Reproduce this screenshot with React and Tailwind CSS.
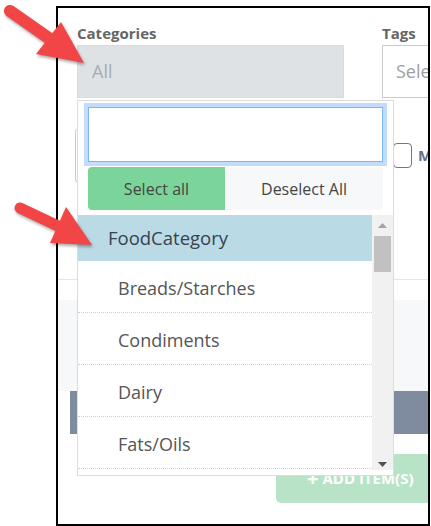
import React from "react";

const items = ["Breads/Starches", "Condiments", "Dairy", "Fats/Oils", "Fruits", "Meats"];

const Arrows = () => (
  <svg
    className="absolute left-0 top-0 z-20 pointer-events-none"
    width="110"
    height="260"
    viewBox="0 0 110 260"
    style={{ filter: "drop-shadow(1px 2px 1.5px rgba(0,0,0,0.35))" }}
  >
    <line x1="10" y1="11" x2="50" y2="39" stroke="#f24646" strokeWidth="12" strokeLinecap="round" />
    <polygon points="61,22 36,54 84,63" fill="#f24646" />
    <line x1="20" y1="208" x2="58" y2="226" stroke="#f24646" strokeWidth="11" strokeLinecap="round" />
    <polygon points="66,207 50,243 92,245" fill="#f24646" />
  </svg>
);

const CategoryDropdown = () => (
  <div className="absolute left-[19px] top-[92px] z-10 w-[317px] h-[376px] bg-white border border-[#dcdcdc] pt-[6px]">
    <div className="px-[10px]">
      <div className="h-[55px] border border-[#7db4f3] shadow-[0_0_0_4px_#c2ddfc] bg-white" />
      <div className="mt-[5px] flex h-[43px] text-[16px] text-[#444]">
        <div className="w-[137px] shrink-0 bg-[#7bd499] rounded-l-[4px] flex items-center justify-center">Select all</div>
        <div className="flex-1 bg-[#f7f8f9] rounded-r-[4px] flex items-center justify-center">Deselect All</div>
      </div>
    </div>
    <div className="mt-[5px] flex h-[255px] overflow-hidden">
      <div className="w-[294px] shrink-0">
        <div className="h-[46px] bg-[#badae6] flex items-center pl-[30px] pb-[1px] text-[18.5px] text-[#36434f]">FoodCategory</div>
        {items.map((item) => (
          <div
            key={item}
            className="h-[52px] border-b border-dotted border-[#d2d2d2] flex items-center pl-[40px] pt-[3px] text-[18px] text-[#555]"
          >
            {item}
          </div>
        ))}
      </div>
      <div className="w-[21px] bg-[#f1f1f1] relative flex flex-col items-center">
        <svg className="mt-[8px]" width="9" height="5" viewBox="0 0 9 5">
          <polygon points="0,5 4.5,0 9,5" fill="#a3a3a3" />
        </svg>
        <div className="mt-[8px] w-[17px] h-[36px] bg-[#c1c1c1]" />
        <div className="flex-1" />
        <svg className="mb-[3px]" width="9" height="5" viewBox="0 0 9 5">
          <polygon points="0,0 9,0 4.5,5" fill="#505050" />
        </svg>
      </div>
    </div>
  </div>
);

export default function App() {
  return (
    <div className="relative w-[431px] h-[526px] bg-white pl-[56px] pt-[6px] overflow-hidden" style={{ fontFamily: '"Open Sans", "Liberation Sans", sans-serif' }}>
      <Arrows />
      <div className="relative w-[374px] h-[520px] border-2 border-black overflow-hidden">
        <div className="flex pt-[15px] pl-[19px]">
          <div className="w-[267px] shrink-0">
            <div className="h-[20px] mb-[2px] text-[15px] font-bold text-[#666] leading-[20px]">Categories</div>
            <div className="h-[53px] bg-[#dee2e5] border border-[#d8dcdf] flex items-center pl-[14px] text-[18px] text-[#a8acb0]">All</div>
          </div>
          <div className="ml-[38px] w-[200px] shrink-0">
            <div className="h-[20px] mb-[2px] text-[15px] font-bold text-[#666] leading-[20px]">Tags</div>
            <div className="h-[53px] border border-[#ccc] flex items-center pl-[13px] text-[18px] text-[#a0a0a0] whitespace-nowrap">Select...</div>
          </div>
        </div>

        <div className="mt-[30px] flex items-center pl-[17px] h-[55px]">
          <div className="w-[300px] shrink-0 h-[55px] border border-[#c8c8c8] rounded-[4px]" />
          <div className="ml-[18px] w-[19px] shrink-0 h-[25px] border-[1.5px] border-[#777] rounded-[4px]" />
          <span className="ml-[6px] shrink-0 text-[15px] font-bold text-[#5f7390] whitespace-nowrap">Max</span>
        </div>

        <div className="h-[97px] border-b border-[#e5e5e5]" />
        <div className="h-[20px]" />
        <div className="h-[91px] bg-[#f7f8fa]" />
        <div className="ml-[12px] h-[43px] bg-[#7f8ca0]" />
        <div className="h-[20px]" />
        <div className="ml-[218px] h-[49px] bg-[#b8e3c6] rounded-l-[5px] flex items-center pl-[31px] text-white font-bold text-[15px] whitespace-nowrap">
          <span className="text-[20px] leading-none mr-[4px]">+</span>ADD ITEM(S)
        </div>

        <CategoryDropdown />
      </div>
    </div>
  );
}
